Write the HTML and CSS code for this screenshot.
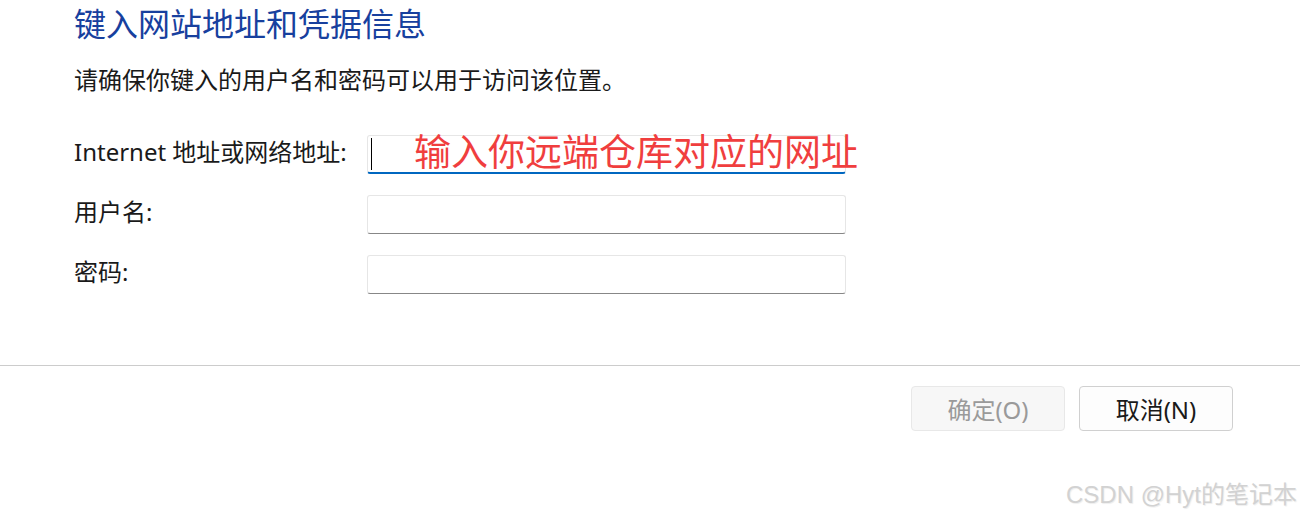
FILE: index.html
```html
<!DOCTYPE html>
<html lang="zh-CN">
<head>
    <meta charset="UTF-8">
    <meta name="viewport" content="width=device-width, initial-scale=1.0">
    <title>键入网站地址和凭据信息</title>
    <link rel="stylesheet" href="styles.css">
</head>
<body>
    <div class="dialog">
        <div class="content">
            <h1>键入网站地址和凭据信息</h1>
            <p class="hint">请确保你键入的用户名和密码可以用于访问该位置。</p>

            <form class="fields">
                <label for="address">Internet 地址或网络地址:</label>
                <div class="field">
                    <input type="text" id="address" class="active">
                    <span class="caret"></span>
                    <span class="note">输入你远端仓库对应的网址</span>
                </div>

                <label for="user">用户名:</label>
                <div class="field">
                    <input type="text" id="user">
                </div>

                <label for="pass">密码:</label>
                <div class="field">
                    <input type="password" id="pass">
                </div>
            </form>
        </div>

        <div class="footer">
            <button type="button" class="btn" disabled>确定(O)</button>
            <button type="button" class="btn">取消(N)</button>
        </div>

        <div class="watermark">CSDN @Hyt的笔记本</div>
    </div>
</body>
</html>
```

FILE: styles.css
```css
body {
    margin: 0;
    background-color: #fff;
    font-family: "Noto Sans", "Noto Sans CJK SC", sans-serif;
    color: #1a1a1a;
}

.dialog {
    position: relative;
    height: 515px;
    overflow: hidden;
}

.content {
    padding-left: 74px;
    height: 365px;
    box-sizing: border-box;
}

h1 {
    margin: 0;
    font-size: 32px;
    line-height: 48px;
    font-weight: normal;
    color: #17409e;
}

.hint {
    margin: 16px 0 0;
    font-size: 24px;
    line-height: 32px;
}

.fields {
    margin-top: 39px;
    display: grid;
    grid-template-columns: 293px 479px;
    row-gap: 21px;
    align-items: center;
}

.fields label {
    font-size: 24px;
    line-height: 32px;
    margin-top: -5px;
}

.field {
    position: relative;
    height: 39px;
}

.field input {
    width: 100%;
    height: 39px;
    box-sizing: border-box;
    margin: 0;
    border: 1px solid #e6e6e6;
    border-bottom-color: #878787;
    border-radius: 3px;
    background-color: #fff;
    outline: none;
}

.field input.active {
    border-bottom: 2px solid #0067c0;
}

.caret {
    position: absolute;
    left: 4px;
    top: 3px;
    width: 1px;
    height: 32px;
    background-color: #000;
}

.note {
    position: absolute;
    left: 47px;
    top: -10px;
    font-family: "Noto Sans CJK SC", sans-serif;
    font-size: 37px;
    line-height: 50px;
    color: #f03e3e;
    white-space: nowrap;
}

.footer {
    border-top: 1px solid #cccccc;
    display: flex;
    justify-content: flex-end;
    gap: 14px;
    padding: 20px 67px 0 0;
}

.btn {
    width: 154px;
    height: 45px;
    border: 1px solid #d0d0d0;
    border-radius: 4px;
    background-color: #fdfdfd;
    font-family: "Noto Sans", "Noto Sans CJK SC", sans-serif;
    font-size: 24px;
    color: #1a1a1a;
    padding: 0;
}

.btn:disabled {
    border-color: #e8e8e8;
    background-color: #f7f7f7;
    color: #9a9a9a;
}

.watermark {
    position: absolute;
    right: 3px;
    bottom: 5px;
    font-family: "Liberation Sans", "Noto Sans CJK SC", sans-serif;
    font-size: 24px;
    color: #d2d2d2;
    text-shadow: 1px 1px 1px #eeeeee;
}
```
